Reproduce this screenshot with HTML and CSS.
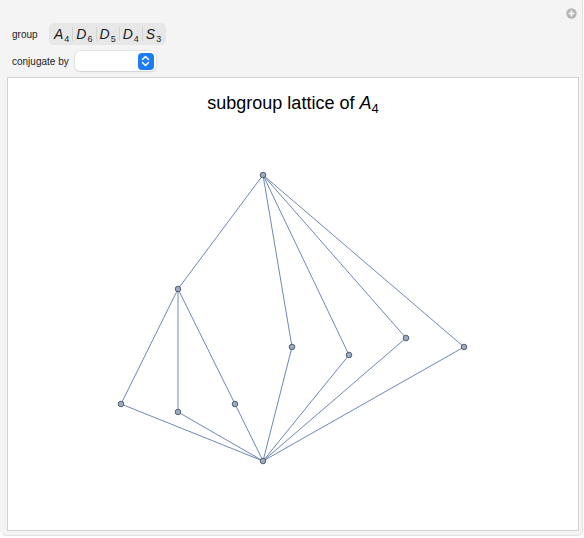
FILE: index.html
```html
<!DOCTYPE html>
<html>
<head>
<meta charset="utf-8">
<link rel="stylesheet" href="styles.css">
</head>
<body>
<div class="panel">
  <div class="topbar">
    <svg class="plus" width="11" height="11" viewBox="0 0 11 11">
      <circle cx="5.5" cy="5.5" r="5.2" fill="#b4b4b4"/>
      <path d="M5.5 2.6v5.8M2.6 5.5h5.8" stroke="#fff" stroke-width="1.6"/>
    </svg>
  </div>
  <div class="controls">
    <div class="row">
      <span class="label group-label">group</span>
      <div class="seg">
        <span class="item"><i>A</i><sub>4</sub></span>
        <span class="item"><i>D</i><sub>6</sub></span>
        <span class="item"><i>D</i><sub>5</sub></span>
        <span class="item"><i>D</i><sub>4</sub></span>
        <span class="item"><i>S</i><sub>3</sub></span>
      </div>
    </div>
    <div class="row">
      <span class="label">conjugate by</span>
      <div class="select">
        <span class="stepper">
          <svg width="9" height="12" viewBox="0 0 9 12">
            <path d="M1.5 4.5L4.5 1.5L7.5 4.5M1.5 7.5L4.5 10.5L7.5 7.5" fill="none" stroke="#fff" stroke-width="1.5" stroke-linecap="round" stroke-linejoin="round"/>
          </svg>
        </span>
      </div>
    </div>
  </div>
  <div class="canvas">
    <div class="title">subgroup lattice of <i>A</i><sub>4</sub></div>
    <svg class="graph" width="570" height="416" viewBox="7 114 570 416">
      <g stroke="#6f88b3" stroke-width="1" fill="none">
        <line x1="262" y1="175" x2="177" y2="289"/>
        <line x1="262" y1="175" x2="291" y2="347"/>
        <line x1="262" y1="175" x2="348" y2="355"/>
        <line x1="262" y1="175" x2="405" y2="338"/>
        <line x1="262" y1="175" x2="463" y2="347"/>
        <line x1="177" y1="289" x2="120" y2="404"/>
        <line x1="177" y1="289" x2="177" y2="412"/>
        <line x1="177" y1="289" x2="234" y2="404"/>
        <line x1="262" y1="461" x2="120" y2="404"/>
        <line x1="262" y1="461" x2="177" y2="412"/>
        <line x1="262" y1="461" x2="234" y2="404"/>
        <line x1="262" y1="461" x2="291" y2="347"/>
        <line x1="262" y1="461" x2="348" y2="355"/>
        <line x1="262" y1="461" x2="405" y2="338"/>
        <line x1="262" y1="461" x2="463" y2="347"/>
      </g>
      <g fill="#9aabc6" stroke="#4b5461" stroke-width="0.9">
        <circle cx="262" cy="175" r="2.8"/>
        <circle cx="177" cy="289" r="2.8"/>
        <circle cx="120" cy="404" r="2.8"/>
        <circle cx="177" cy="412" r="2.8"/>
        <circle cx="234" cy="404" r="2.8"/>
        <circle cx="291" cy="347" r="2.8"/>
        <circle cx="348" cy="355" r="2.8"/>
        <circle cx="405" cy="338" r="2.8"/>
        <circle cx="463" cy="347" r="2.8"/>
        <circle cx="262" cy="461" r="2.8"/>
      </g>
    </svg>
  </div>
</div>
</body>
</html>
```

FILE: styles.css
```css
html, body {
  margin: 0;
  padding: 0;
  background: #ffffff;
}

body {
  font-family: "Liberation Sans", Arial, sans-serif;
}

.panel {
  box-sizing: border-box;
  width: 583px;
  height: 536px;
  background: #f4f4f4;
  border: 1px solid #e3e3e3;
  border-top-color: #f4f4f4;
  border-left-color: #f4f4f4;
  border-radius: 0 0 6px 6px;
  display: flex;
  flex-direction: column;
}

.topbar {
  height: 22px;
  display: flex;
  justify-content: flex-end;
  align-items: flex-start;
  padding: 7px 5px 0 0;
  box-sizing: border-box;
}

.plus {
  display: block;
}

.controls {
  display: flex;
  flex-direction: column;
  gap: 6px;
  padding-left: 11px;
}

.row {
  display: flex;
  align-items: center;
}

.label {
  font-size: 10px;
  color: #222;
}

.group-label {
  width: 37px;
}

.seg {
  display: flex;
  align-items: center;
  height: 22px;
  background: #e7e7e7;
  border-radius: 5px;
  padding: 0 2px;
}

.item {
  display: flex;
  align-items: baseline;
  padding: 0 3px;
  height: 14px;
  line-height: 14px;
  font-size: 14px;
  color: #1a1a1a;
  border-left: 1px solid #d3d3d3;
}

.item:first-child {
  border-left: none;
}

.item i {
  font-style: italic;
}

.item sub {
  font-size: 9px;
  vertical-align: baseline;
  position: relative;
  top: 3px;
  margin-left: 1px;
}

.select {
  margin-left: 6px;
  width: 81px;
  height: 20px;
  box-sizing: border-box;
  background: #ffffff;
  border-radius: 5px;
  box-shadow: 0 0 0 0.5px #d6d6d6, 0 1px 1.5px rgba(0,0,0,0.15);
  display: flex;
  justify-content: flex-end;
  align-items: center;
  padding-right: 2px;
}

.stepper {
  width: 16px;
  height: 17px;
  background: #1c7cf4;
  border-radius: 4px;
  display: flex;
  align-items: center;
  justify-content: center;
}

.stepper svg {
  display: block;
}

.canvas {
  margin: 6px 0 0 6px;
  width: 572px;
  height: 454px;
  box-sizing: border-box;
  background: #ffffff;
  border: 1px solid #d2d2d2;
  display: flex;
  flex-direction: column;
}

.title {
  height: 36px;
  box-sizing: border-box;
  padding-top: 14px;
  line-height: 22px;
  font-size: 18px;
  text-align: center;
  color: #000;
}

.title i {
  font-style: italic;
}

.title sub {
  font-size: 13px;
  vertical-align: baseline;
  position: relative;
  top: 4px;
}

.graph {
  display: block;
}
```
